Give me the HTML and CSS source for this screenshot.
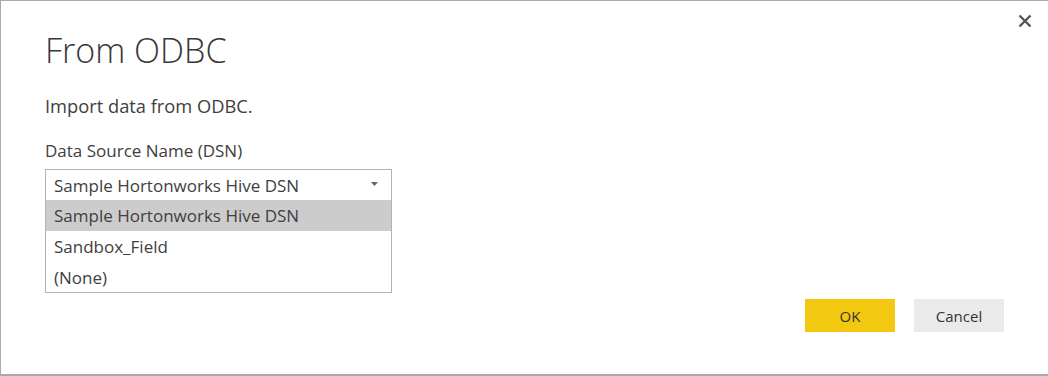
FILE: index.html
```html
<!DOCTYPE html>
<html>
<head>
<meta charset="utf-8">
<link rel="stylesheet" href="styles.css">
</head>
<body>
<div class="dialog">
  <button class="close" aria-label="Close">
    <svg width="14" height="14" viewBox="0 0 14 14"><path d="M1.5 1.5 L12.5 12.5 M12.5 1.5 L1.5 12.5" stroke="#555" stroke-width="2.4" fill="none"/></svg>
  </button>
  <h1 class="title">From ODBC</h1>
  <p class="desc">Import data from ODBC.</p>
  <div class="label">Data Source Name (DSN)</div>
  <div class="combo">
    <div class="select">
      <span>Sample Hortonworks Hive DSN</span>
      <svg class="arrow" width="7" height="4" viewBox="0 0 7 4"><path d="M0 0 H7 L3.5 4 Z" fill="#666"/></svg>
    </div>
    <ul class="list">
      <li class="item selected">Sample Hortonworks Hive DSN</li>
      <li class="item">Sandbox_Field</li>
      <li class="item last">(None)</li>
    </ul>
  </div>
  <div class="actions">
    <button class="btn ok">OK</button>
    <button class="btn cancel">Cancel</button>
  </div>
</div>
</body>
</html>
```
FILE: styles.css
```css
* { box-sizing: border-box; }
html, body { margin: 0; padding: 0; background: #fff; }
body { font-family: "Open Sans", "Noto Sans", sans-serif; color: #404040; }
.dialog {
  position: relative;
  width: 1048px;
  height: 376px;
  border-top: 1px solid #a9a9a9;
  border-left: 1px solid #a9a9a9;
  border-bottom: 2px solid #a9a9a9;
  padding: 0 44px 0 44px;
  display: flex;
  flex-direction: column;
}
.close {
  position: absolute;
  top: 13px;
  right: 16px;
  width: 14px;
  height: 14px;
  padding: 0;
  border: 0;
  background: none;
  display: flex;
}
.title {
  margin: 27px 0 0 0;
  font-size: 34px;
  font-weight: 300;
  line-height: 44px;
  color: #383838;
}
.desc {
  margin: 22px 0 0 0;
  font-size: 18.3px;
  line-height: 24px;
  color: #404040;
}
.label {
  margin-top: 22px;
  font-size: 17px;
  line-height: 22px;
  color: #404040;
}
.combo {
  margin-top: 7px;
  width: 347px;
  border: 1px solid #b3b3b3;
}
.select {
  height: 30px;
  display: flex;
  align-items: center;
  justify-content: space-between;
  padding: 0 13px 0 8px;
  font-size: 17px;
  color: #404040;
}
.arrow { margin-top: -2px; }
.list { list-style: none; margin: 0; padding: 0; }
.item {
  height: 31px;
  display: flex;
  align-items: center;
  padding-left: 8px;
  font-size: 17px;
  color: #404040;
}
.item.last { height: 30px; }
.item.selected { background: #cccccc; }
.actions {
  margin-top: 6px;
  display: flex;
  justify-content: flex-end;
  gap: 19px;
}
.btn {
  width: 90px;
  height: 33px;
  border: 0;
  padding: 0;
  font-family: "Open Sans", "Noto Sans", sans-serif;
  font-size: 15px;
  color: #333;
}
.ok { background: #f2c811; }
.cancel { background: #eaeaea; }
```
